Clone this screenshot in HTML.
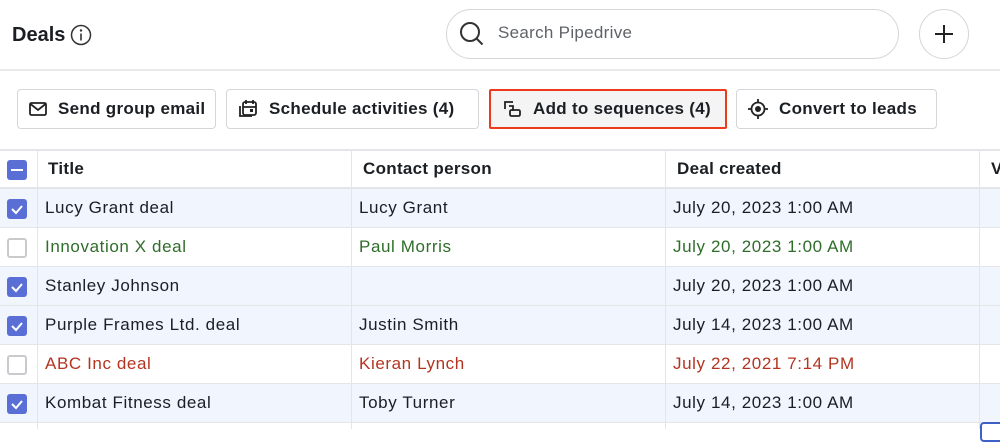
<!DOCTYPE html>
<html><head><style>
*{box-sizing:border-box;margin:0;padding:0}
body{width:1000px;height:429px;overflow:hidden;background:#fff;font-family:"Liberation Sans",sans-serif;color:#1b1f23;position:relative}
.abs{position:absolute}
.btn{position:absolute;top:89px;height:40px;border:1px solid #d4d6da;border-radius:4px;background:#fff;font-weight:bold;font-size:17px;display:flex;align-items:center;padding-left:10px;gap:10px;letter-spacing:0.3px}
.row{position:absolute;left:0;width:1000px;height:39px;border-bottom:1px solid #e3e5e8;font-size:17px;letter-spacing:0.6px}
.row.sel{background:#f0f5fe}
.cell{position:absolute;top:0;height:100%;display:flex;align-items:center}
.cb{position:absolute;left:7px;top:10px;width:20px;height:20px;border-radius:3px}
.cb.on{background:#5a6fd6}
.cb.off{border:2px solid #c8cacd;background:#fff}
.vl{position:absolute;top:150px;bottom:0;width:1px;background:#e3e5e8}
</style></head><body>
<div class="abs" style="left:12px;top:24px;font-size:20px;font-weight:bold">Deals</div>
<svg class="abs" style="left:70px;top:24px" width="22" height="22" viewBox="0 0 22 22"><circle cx="11" cy="11" r="9.5" fill="none" stroke="#333" stroke-width="1.5"/><circle cx="11" cy="6.5" r="1.2" fill="#333"/><path d="M11 9.5v7" stroke="#333" stroke-width="1.6"/></svg>
<div class="abs" style="left:446px;top:9px;width:453px;height:50px;border:1px solid #d4d6da;border-radius:25px"></div>
<svg class="abs" style="left:458px;top:20px" width="28" height="28" viewBox="0 0 28 28"><circle cx="12" cy="12" r="9" fill="none" stroke="#333" stroke-width="2"/><path d="M18.5 18.5l6 6" stroke="#333" stroke-width="2"/></svg>
<div class="abs" style="left:498px;top:23px;font-size:17px;color:#5f6368;letter-spacing:0.3px">Search Pipedrive</div>
<div class="abs" style="left:919px;top:9px;width:50px;height:50px;border:1px solid #d4d6da;border-radius:50%"></div>
<svg class="abs" style="left:934px;top:24px" width="20" height="20"><path d="M10 1v18M1 10h18" stroke="#222" stroke-width="2"/></svg>
<div class="abs" style="left:0;top:69px;width:1000px;height:2px;background:#e8e9eb"></div>

<div class="btn" style="left:17px;width:199px"><svg width="20" height="16" viewBox="0 0 20 16"><rect x="2" y="2" width="16" height="12" rx="1.5" fill="none" stroke="#222" stroke-width="1.8"/><path d="M2.5 3l7.5 6 7.5-6" fill="none" stroke="#222" stroke-width="1.8"/></svg>Send group email</div>
<div class="btn" style="left:226px;width:253px"><svg width="22" height="22" viewBox="0 0 22 22"><rect x="6" y="4" width="13" height="13" rx="2" fill="none" stroke="#222" stroke-width="1.8"/><path d="M3 8v10h12M9 2v4M16 2v4M6 9h13" stroke="#222" stroke-width="1.8" fill="none"/><rect x="13" y="11" width="3" height="3" fill="#222"/></svg>Schedule activities (4)</div>
<div class="btn" style="left:489px;width:238px;background:#f4f4f5;border:2px solid #ee3a1c;border-radius:2px"><svg width="22" height="22" viewBox="0 0 22 22"><path d="M12 4H4v7" fill="none" stroke="#222" stroke-width="1.8"/><path d="M8 8h4v5" fill="none" stroke="#222" stroke-width="1.8"/><rect x="9" y="12" width="10" height="6" rx="1.5" fill="none" stroke="#222" stroke-width="1.8"/></svg>Add to sequences (4)</div>
<div class="btn" style="left:736px;width:201px"><svg width="22" height="22" viewBox="0 0 22 22"><circle cx="11" cy="11" r="6.5" fill="none" stroke="#222" stroke-width="1.8"/><circle cx="11" cy="11" r="3" fill="#222"/><path d="M11 1v3M11 18v3M1 11h3M18 11h3" stroke="#222" stroke-width="1.8"/></svg>Convert to leads</div>

<div class="abs" style="left:0;top:149px;width:1000px;height:2px;background:#e3e5e8"></div>
<div class="row" style="top:151px;height:38px;border-bottom:2px solid #e3e5e8;font-weight:bold;letter-spacing:0.3px">
<div class="cb on" style="top:9px"><div style="position:absolute;left:4px;top:9px;width:12px;height:2px;background:#fff"></div></div>
<div class="cell" style="left:48px">Title</div><div class="cell" style="left:363px">Contact person</div><div class="cell" style="left:677px">Deal created</div><div class="cell" style="left:991px">V</div></div>

<div class="row sel" style="top:189px"><div class="cb on"><svg width="20" height="20"><path d="M5 10l4 4 6-7" fill="none" stroke="#fff" stroke-width="2"/></svg></div><div class="cell" style="left:45px">Lucy Grant deal</div><div class="cell" style="left:359px">Lucy Grant</div><div class="cell" style="left:673px">July 20, 2023 1:00 AM</div></div>
<div class="row" style="top:228px;color:#2f6d2a"><div class="cb off"></div><div class="cell" style="left:45px">Innovation X deal</div><div class="cell" style="left:359px">Paul Morris</div><div class="cell" style="left:673px">July 20, 2023 1:00 AM</div></div>
<div class="row sel" style="top:267px"><div class="cb on"><svg width="20" height="20"><path d="M5 10l4 4 6-7" fill="none" stroke="#fff" stroke-width="2"/></svg></div><div class="cell" style="left:45px">Stanley Johnson</div><div class="cell" style="left:673px">July 20, 2023 1:00 AM</div></div>
<div class="row sel" style="top:306px"><div class="cb on"><svg width="20" height="20"><path d="M5 10l4 4 6-7" fill="none" stroke="#fff" stroke-width="2"/></svg></div><div class="cell" style="left:45px">Purple Frames Ltd. deal</div><div class="cell" style="left:359px">Justin Smith</div><div class="cell" style="left:673px">July 14, 2023 1:00 AM</div></div>
<div class="row" style="top:345px;color:#b33420"><div class="cb off"></div><div class="cell" style="left:45px">ABC Inc deal</div><div class="cell" style="left:359px">Kieran Lynch</div><div class="cell" style="left:673px">July 22, 2021 7:14 PM</div></div>
<div class="row sel" style="top:384px"><div class="cb on"><svg width="20" height="20"><path d="M5 10l4 4 6-7" fill="none" stroke="#fff" stroke-width="2"/></svg></div><div class="cell" style="left:45px">Kombat Fitness deal</div><div class="cell" style="left:359px">Toby Turner</div><div class="cell" style="left:673px">July 14, 2023 1:00 AM</div></div>

<div class="vl" style="left:37px"></div><div class="vl" style="left:351px"></div><div class="vl" style="left:665px"></div><div class="vl" style="left:979px"></div>
<div class="abs" style="left:980px;top:422px;width:30px;height:20px;border:2px solid #3e5fc8;border-radius:4px"></div>
</body></html>
